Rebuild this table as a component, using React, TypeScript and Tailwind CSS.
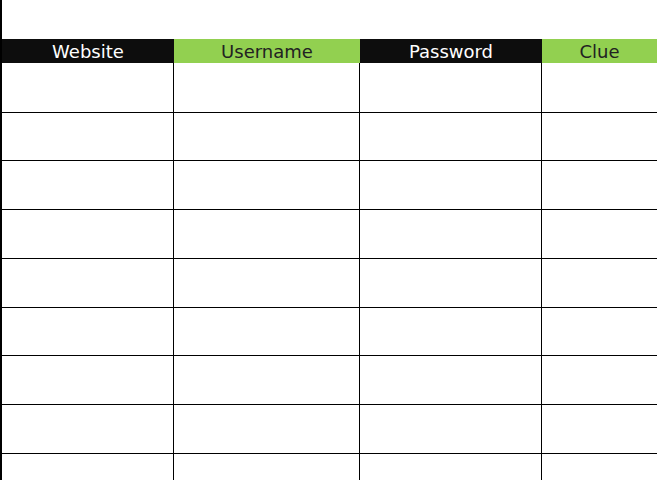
const columns = [
  { label: "Website", head: "bg-[#0d0d0d] text-white", width: "w-[172px]" },
  { label: "Username", head: "bg-[#92d050] text-[#222222]", width: "w-[186px]" },
  { label: "Password", head: "bg-[#0d0d0d] text-white", width: "w-[182px]" },
  { label: "Clue", head: "bg-[#92d050] text-[#222222]", width: "flex-1" },
];

// row heights include the 1px bottom rule
const rowHeights = [
  "h-[50px]",
  "h-[48px]",
  "h-[49px]",
  "h-[49px]",
  "h-[49px]",
  "h-[48px]",
  "h-[49px]",
  "h-[49px]",
  "h-[49px]",
];

export default function App() {
  return (
    <div
      className="h-[480px] w-[657px] overflow-hidden border-l-2 border-black bg-white"
      style={{ fontFamily: '"DejaVu Sans", "Liberation Sans", sans-serif' }}
    >
      <div className="h-[39px]" />
      <div className="flex h-[24px]">
        {columns.map((col) => (
          <div
            key={col.label}
            className={`${col.width} ${col.head} flex items-center justify-center pt-[2px] text-[18px] leading-none`}
          >
            {col.label}
          </div>
        ))}
      </div>
      {rowHeights.map((h, i) => (
        <div key={i} className={`flex ${h} border-b border-black`}>
          {columns.map((col, j) => (
            <div
              key={col.label}
              className={`${col.width} ${j < 3 ? "border-r border-black" : ""}`}
            />
          ))}
        </div>
      ))}
    </div>
  );
}
